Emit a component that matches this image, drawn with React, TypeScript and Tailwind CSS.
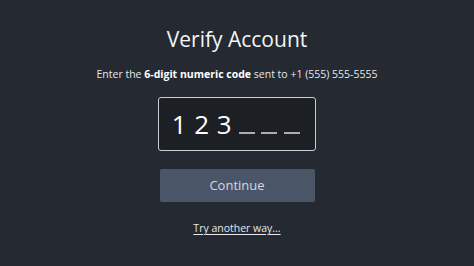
import React from "react";

export default function App() {
  const digits = ["1", "2", "3", "", "", ""];
  return (
    <div
      className="w-[474px] h-[266px] bg-[#242932] flex flex-col items-center text-white overflow-hidden"
      style={{ fontFamily: '"Open Sans", "Noto Sans", sans-serif' }}
    >
      <h1 className="mt-[26px] text-[21px] leading-[26px] font-normal text-[#f4f5f7]">Verify Account</h1>
      <p className="mt-[15px] text-[10.5px] leading-[14px] text-[#e6e8ec]">
        Enter the <span className="font-bold text-white">6-digit numeric code</span> sent to +1 (555) 555-5555
      </p>
      <div className="mt-[16px] w-[158px] h-[54px] rounded-[3px] border-[1.5px] border-[#c9ccd2] bg-[#1c1f24] flex items-center pl-[9px]">
        {digits.map((d, i) => (
          <div key={i} className="w-[22.5px] h-[30px] flex items-end justify-center relative">
            {d ? (
              <span className="text-[26px] leading-[30px] text-white font-medium">{d}</span>
            ) : (
              <span className="block w-[16px] h-[2px] bg-[#a9adb4] mb-[5px]" />
            )}
          </div>
        ))}
      </div>
      <button className="mt-[18px] w-[155px] h-[33px] rounded-[2px] bg-[#4b5568] text-[13px] text-[#d4d8e0]">
        Continue
      </button>
      <a className="mt-[19px] text-[10.5px] leading-[14px] text-[#e6e8ec] underline underline-offset-2">
        Try another way...
      </a>
    </div>
  );
}
